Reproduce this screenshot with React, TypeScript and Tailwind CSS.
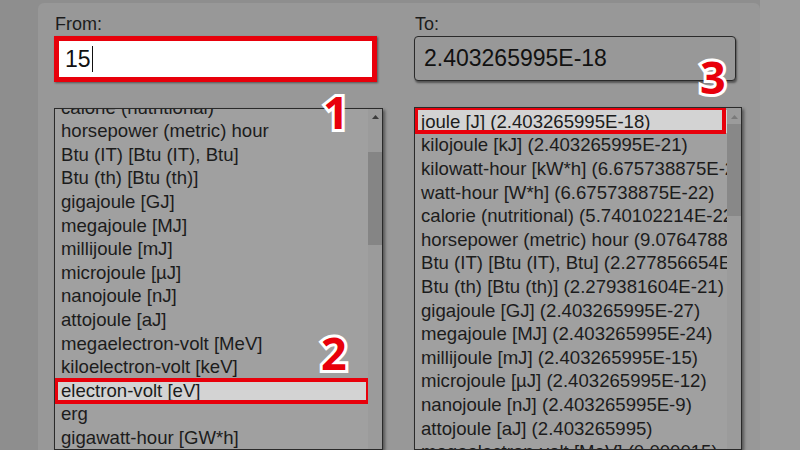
import React from "react";

const leftItems = [
  "calorie (nutritional)",
  "horsepower (metric) hour",
  "Btu (IT) [Btu (IT), Btu]",
  "Btu (th) [Btu (th)]",
  "gigajoule [GJ]",
  "megajoule [MJ]",
  "millijoule [mJ]",
  "microjoule [µJ]",
  "nanojoule [nJ]",
  "attojoule [aJ]",
  "megaelectron-volt [MeV]",
  "kiloelectron-volt [keV]",
  "electron-volt [eV]",
  "erg",
  "gigawatt-hour [GW*h]",
  "megawatt-hour [MW*h]",
];

const rightItems = [
  "joule [J] (2.403265995E-18)",
  "kilojoule [kJ] (2.403265995E-21)",
  "kilowatt-hour [kW*h] (6.675738875E-25)",
  "watt-hour [W*h] (6.675738875E-22)",
  "calorie (nutritional) (5.740102214E-22)",
  "horsepower (metric) hour (9.0764788E-25)",
  "Btu (IT) [Btu (IT), Btu] (2.277856654E-21)",
  "Btu (th) [Btu (th)] (2.279381604E-21)",
  "gigajoule [GJ] (2.403265995E-27)",
  "megajoule [MJ] (2.403265995E-24)",
  "millijoule [mJ] (2.403265995E-15)",
  "microjoule [µJ] (2.403265995E-12)",
  "nanojoule [nJ] (2.403265995E-9)",
  "attojoule [aJ] (2.403265995)",
  "megaelectron-volt [MeV] (0.000015)",
];

function Arrow({ dark }: { dark: boolean }) {
  return (
    <svg width="7" height="4" viewBox="0 0 7 4" className="block">
      <polygon points="0,4 3.5,0 7,4" fill={dark ? "#3c3c3c" : "#7a7a7a"} />
    </svg>
  );
}

function Num({ n, cls }: { n: string; cls: string }) {
  return (
    <div
      className={`absolute text-[45px] leading-[46px] font-bold text-[#e8000b] [font-family:'Open_Sans',sans-serif] [paint-order:stroke_fill] [-webkit-text-stroke:6px_white] ${cls}`}
    >
      {n}
    </div>
  );
}

export default function App() {
  return (
    <div className="relative w-[800px] h-[450px] overflow-hidden bg-[#8e8e8e] flex [font-family:'Liberation_Sans',Arial,sans-serif] text-[#1c1c1c]">
      <div className="ml-[38px] mt-[3px] w-[722px] rounded-t-[6px] bg-[#989898] pl-[16px] pt-[11px] flex gap-[31px]">
        {/* From column */}
        <div className="w-[329px] flex flex-col">
          <div className="text-[18px] leading-[20px] pl-[1px]">From:</div>
          <div className="mt-[2px] w-[323px] h-[48px] border-[5px] border-[#e8000b] bg-white shadow-[1px_1px_2px_rgba(0,0,0,0.45)] flex items-center pl-[6px]">
            <span className="text-[23px] leading-[26px] text-[#111]">15</span>
            <span className="ml-[1px] w-[1px] h-[26px] bg-[#111]" />
          </div>
          <div className="mt-[26px] h-[360px] border border-[#2a2a2a] bg-[#a0a0a0] shadow-[2px_2px_3px_rgba(0,0,0,0.45)] flex overflow-hidden">
            <div className="relative flex-1 overflow-hidden">
              <div className="-mt-[13.5px] text-[18.6px] leading-[23.6px]">
                {leftItems.map((t) => (
                  <div
                    key={t}
                    className={`pl-[6px] whitespace-nowrap ${t === "electron-volt [eV]" ? "relative bg-[#d3d3d3]" : ""}`}
                  >
                    {t}
                    {t === "electron-volt [eV]" && (
                      <span className="absolute -top-[1px] -bottom-[2px] -left-[1px] right-[-2px] border-[4px] border-[#e8000b]" />
                    )}
                  </div>
                ))}
              </div>
            </div>
            <div className="w-[14px] bg-[#9b9b9b] flex flex-col items-center">
              <div className="pt-[6px] h-[43px]">
                <Arrow dark />
              </div>
              <div className="w-full h-[93px] bg-[#858585]" />
            </div>
          </div>
        </div>

        {/* To column */}
        <div className="w-[328px] flex flex-col">
          <div className="text-[18px] leading-[20px] pl-[1px]">To:</div>
          <div className="mt-[2px] w-[322px] h-[47px] rounded-[4px] border border-[#2a2a2a] bg-[#989898] shadow-[1px_2px_2px_rgba(0,0,0,0.45)] flex items-center pl-[9px]">
            <span className="text-[23px] leading-[26px] text-[#111]">2.403265995E-18</span>
          </div>
          <div className="mt-[26px] h-[360px] border border-[#2a2a2a] bg-[#a0a0a0] shadow-[2px_2px_3px_rgba(0,0,0,0.45)] flex overflow-hidden">
            <div className="relative flex-1 overflow-hidden">
              <div className="pt-[2px] text-[18.6px] leading-[23.6px]">
                {rightItems.map((t, i) => (
                  <div
                    key={t}
                    className={`pl-[6px] whitespace-nowrap ${i === 0 ? "relative bg-[#d3d3d3]" : ""}`}
                  >
                    {t}
                    {i === 0 && (
                      <span className="absolute -top-[4px] bottom-[-1px] -left-[1px] right-[1px] border-[4px] border-[#e8000b]" />
                    )}
                  </div>
                ))}
              </div>
            </div>
            <div className="w-[14px] bg-[#9b9b9b] flex flex-col items-center">
              <div className="pt-[7px] h-[16px]">
                <Arrow dark={false} />
              </div>
              <div className="w-full h-[92px] bg-[#888888]" />
            </div>
          </div>
        </div>
      </div>
      <div className="flex-1 bg-[#9c9c9c]" />

      <Num n="1" cls="left-[323px] top-[89px]" />
      <Num n="3" cls="left-[700px] top-[54px]" />
      <Num n="2" cls="left-[321px] top-[330px]" />
    </div>
  );
}
